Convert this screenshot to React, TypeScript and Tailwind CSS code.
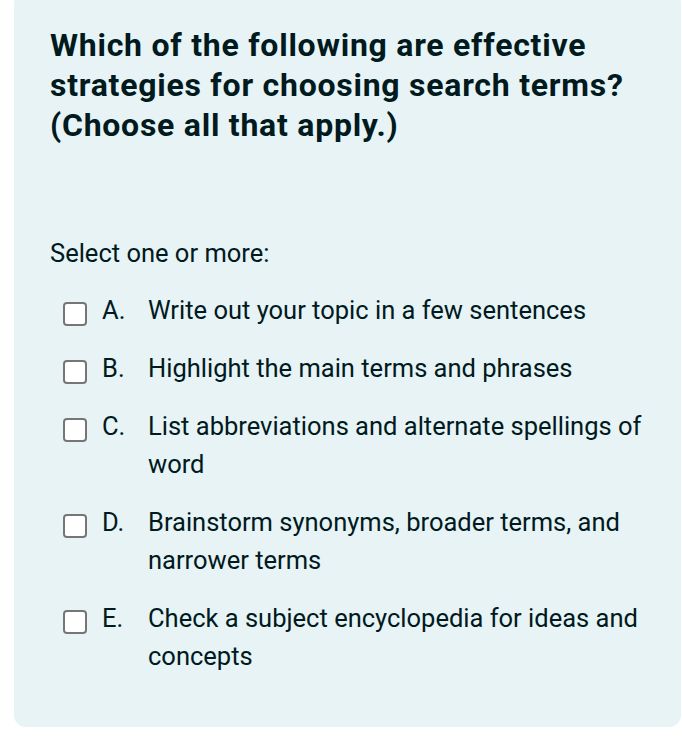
import React from 'react';

const options = [
  { letter: 'A.', text: 'Write out your topic in a few sentences' },
  { letter: 'B.', text: 'Highlight the main terms and phrases' },
  { letter: 'C.', text: 'List abbreviations and alternate spellings of word' },
  { letter: 'D.', text: 'Brainstorm synonyms, broader terms, and narrower terms' },
  { letter: 'E.', text: 'Check a subject encyclopedia for ideas and concepts' },
];

const App: React.FC = () => {
  return (
    <div className="min-h-screen bg-white font-['Roboto',sans-serif] text-[#001a1e]">
      <div className="ml-[14px] -mt-2 w-[667px] rounded-xl bg-[#e7f3f5] pl-[36px] pr-[20px] pt-[33px] pb-[52px]">
        <h2 className="text-[32px] font-bold leading-[40px] tracking-[0.75px]">
          Which of the following are effective strategies for choosing search terms? (Choose all that apply.)
        </h2>
        <p className="mt-[89px] text-[25.5px] leading-[38px]">Select one or more:</p>
        <div className="mt-[19px] flex flex-col gap-[20px]">
          {options.map((o) => (
            <label key={o.letter} className="flex items-start text-[25.5px] leading-[38px]">
              <span className="ml-[13px] mt-[11px] h-[24px] w-[24px] shrink-0 rounded-[4px] border-2 border-[#767676] bg-white" />
              <span className="ml-[15px] w-[46px] shrink-0">{o.letter}</span>
              <span className="flex-1">{o.text}</span>
            </label>
          ))}
        </div>
      </div>
    </div>
  );
};

export default App;
